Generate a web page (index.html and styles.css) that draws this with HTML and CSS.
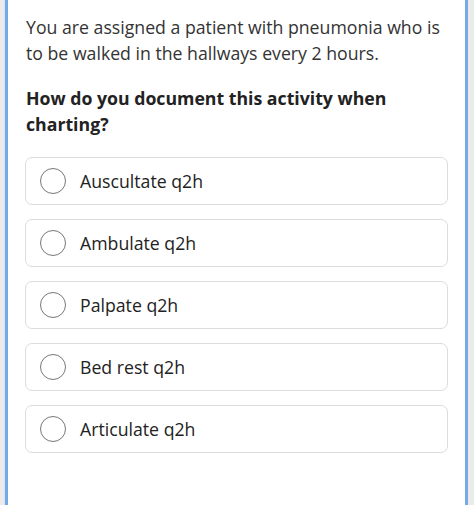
FILE: index.html
```html
<!DOCTYPE html>
<html lang="en">
	<head>
		<meta charset="UTF-8" />
		<meta name="viewport" content="width=device-width, initial-scale=1.0" />
		<title>Question</title>
		<link rel="stylesheet" href="styles.css">
	</head>
	<body>
		<div class="frame">
			<div class="panel">
				<p class="stem">You are assigned a patient with pneumonia who is to be walked in the hallways every 2 hours.</p>
				<p class="prompt">How do you document this activity when charting?</p>
				<div class="options">
					<label class="option"><span class="radio"></span>Auscultate q2h</label>
					<label class="option"><span class="radio"></span>Ambulate q2h</label>
					<label class="option"><span class="radio"></span>Palpate q2h</label>
					<label class="option"><span class="radio"></span>Bed rest q2h</label>
					<label class="option"><span class="radio"></span>Articulate q2h</label>
				</div>
			</div>
		</div>
	</body>
</html>
```

FILE: styles.css
```css
/* base */
body,
html {
	margin: 0;
	padding: 0;
	width: 100%;
	height: 100%;
	font-family: "Open Sans", "Noto Sans", sans-serif;
	background-color: #ebebeb;
	overflow: hidden;
}

.frame {
	height: 100%;
	padding: 0 6px 0 5px;
	box-sizing: border-box;
}

.panel {
	height: 100%;
	box-sizing: border-box;
	background-color: #fff;
	border-left: 3px solid #76a9e6;
	border-right: 3px solid #76a9e6;
	box-shadow: -1px 0 0 #d8e6f4;
	padding: 14px 17px 0 18px;
}

/* question */
.stem {
	margin: 0;
	font-size: 17.7px;
	line-height: 26px;
	color: #333;
}

.prompt {
	margin: 19px 0 0 0;
	font-size: 17.7px;
	line-height: 26px;
	font-weight: bold;
	color: #222;
}

/* answers */
.options {
	display: flex;
	flex-direction: column;
	gap: 14px;
	margin-top: 20px;
}

.option {
	display: flex;
	align-items: center;
	height: 48px;
	margin-left: -1px;
	box-sizing: border-box;
	border: 1px solid #dcdcdc;
	border-radius: 7px;
	padding-left: 14px;
	font-size: 17.7px;
	color: #222;
}

.radio {
	width: 26px;
	height: 26px;
	box-sizing: border-box;
	border: 1px solid #777;
	border-radius: 50%;
	margin-right: 14px;
}
```
